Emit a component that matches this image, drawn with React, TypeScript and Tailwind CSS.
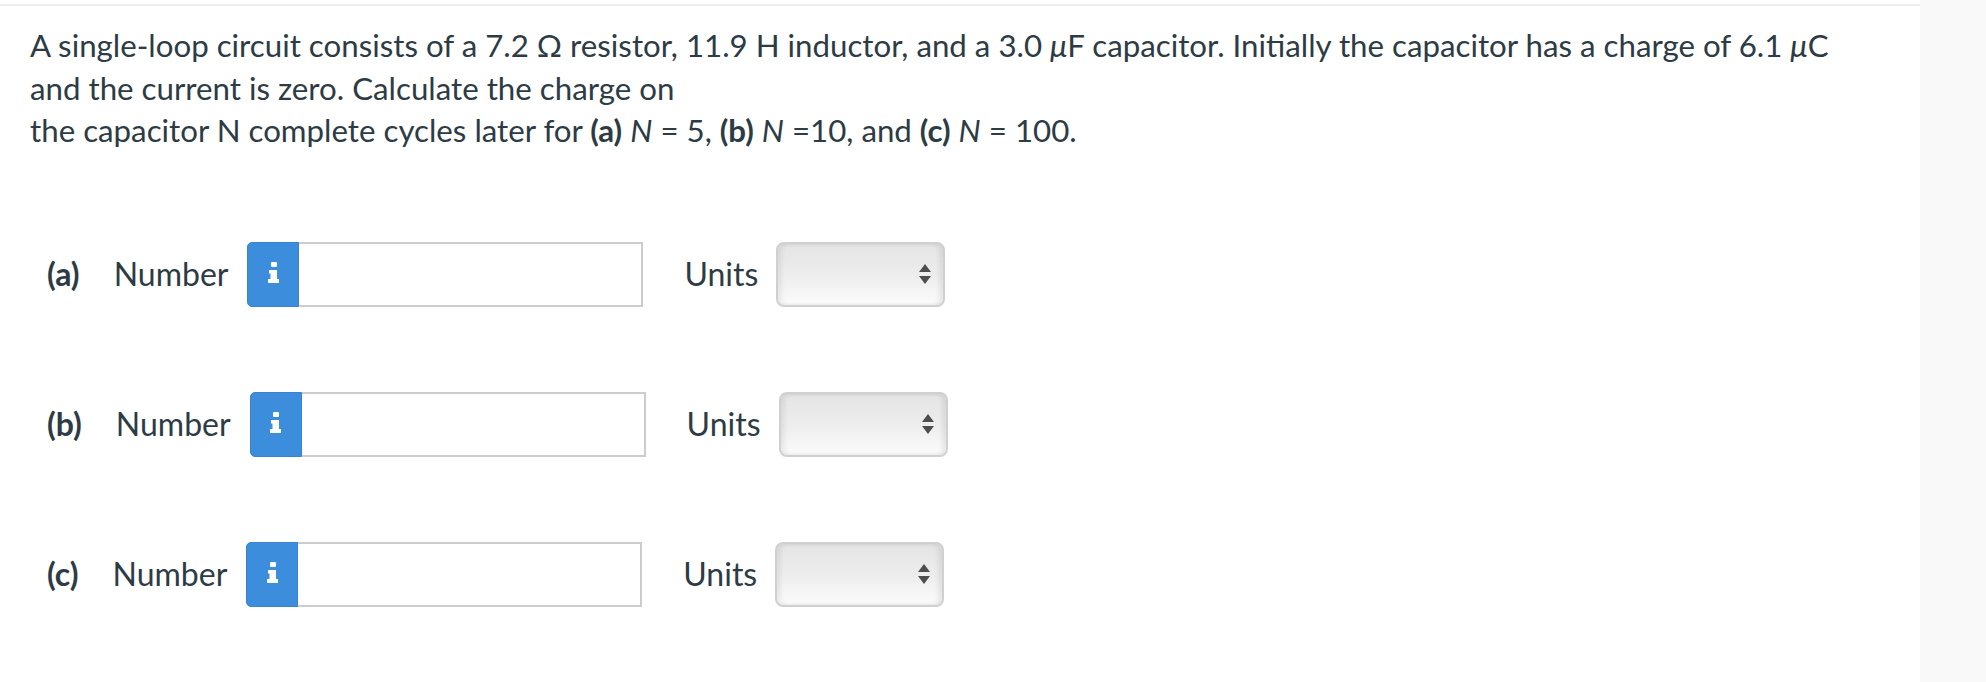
import React from 'react'

const rows = ['(a)', '(b)', '(c)']

function InfoIcon() {
  return (
    <svg width="11" height="21" viewBox="0 0 11 21" fill="#ffffff" className="mb-[4px]" aria-hidden="true">
      <rect x="3" y="0" width="6" height="5" rx="1" />
      <path d="M1 8h8v9h2v4h-11v-4h2.5v-5.5h-1.5z" />
    </svg>
  )
}

function SelectArrows() {
  return (
    <svg width="12" height="20" viewBox="0 0 12 20" fill="#4d4d4d" aria-hidden="true">
      <path d="M6 0L12 8H0z" />
      <path d="M0 12h12L6 20z" />
    </svg>
  )
}

function AnswerRow({ label }: { label: string }) {
  return (
    <div className="flex items-center h-[65px] pl-[47px]">
      <span className="font-bold">{label}</span>
      <span className="ml-[34px]">Number</span>
      <button
        className="ml-[19px] w-[52px] h-[65px] flex items-center justify-center bg-[#3d8ddd] border border-[#3a82cf] rounded-l-[5px]"
        aria-label="info"
      >
        <InfoIcon />
      </button>
      <input
        type="text"
        className="w-[344px] h-[65px] border-2 border-l-0 border-[#cccccc] bg-white outline-none"
      />
      <span className="ml-[41px]">Units</span>
      <div className="ml-[18px] w-[169px] h-[65px] rounded-[8px] border-2 border-[#d0d0d0] bg-gradient-to-b from-[#e4e4e4] via-[#ededed] to-[#fbfbfb] shadow-[inset_4px_0_4px_rgba(0,0,0,0.06),inset_-4px_0_4px_rgba(0,0,0,0.07)] flex items-center justify-end pr-[12px]">
        <SelectArrows />
      </div>
    </div>
  )
}

export default function App() {
  return (
    <div className="flex w-full h-[682px] bg-white text-[#2d3b45] font-['Lato',sans-serif]">
      <div className="w-[1920px] shrink-0">
        <div className="mt-[4px] border-t-2 border-[#eeeeee]" />
        <p className="mt-[18px] px-[30px] text-[31.25px] leading-[42.5px] whitespace-nowrap">
          A single-loop circuit consists of a 7.2 Ω resistor, 11.9 H inductor, and a 3.0 <i>μ</i>F capacitor. Initially the capacitor has a charge of 6.1 <i>μ</i>C
          <br />
          and the current is zero. Calculate the charge on
          <br />
          the capacitor N complete cycles later for <b>(a)</b> <i>N</i> = 5, <b>(b)</b> <i>N</i> =10, and <b>(c)</b> <i>N</i> = 100.
        </p>
        <div className="mt-[90px] flex flex-col gap-[85px] text-[32px]">
          {rows.map((r) => (
            <AnswerRow key={r} label={r} />
          ))}
        </div>
      </div>
      <div className="flex-1 bg-[#f9f9f9]" />
    </div>
  )
}
